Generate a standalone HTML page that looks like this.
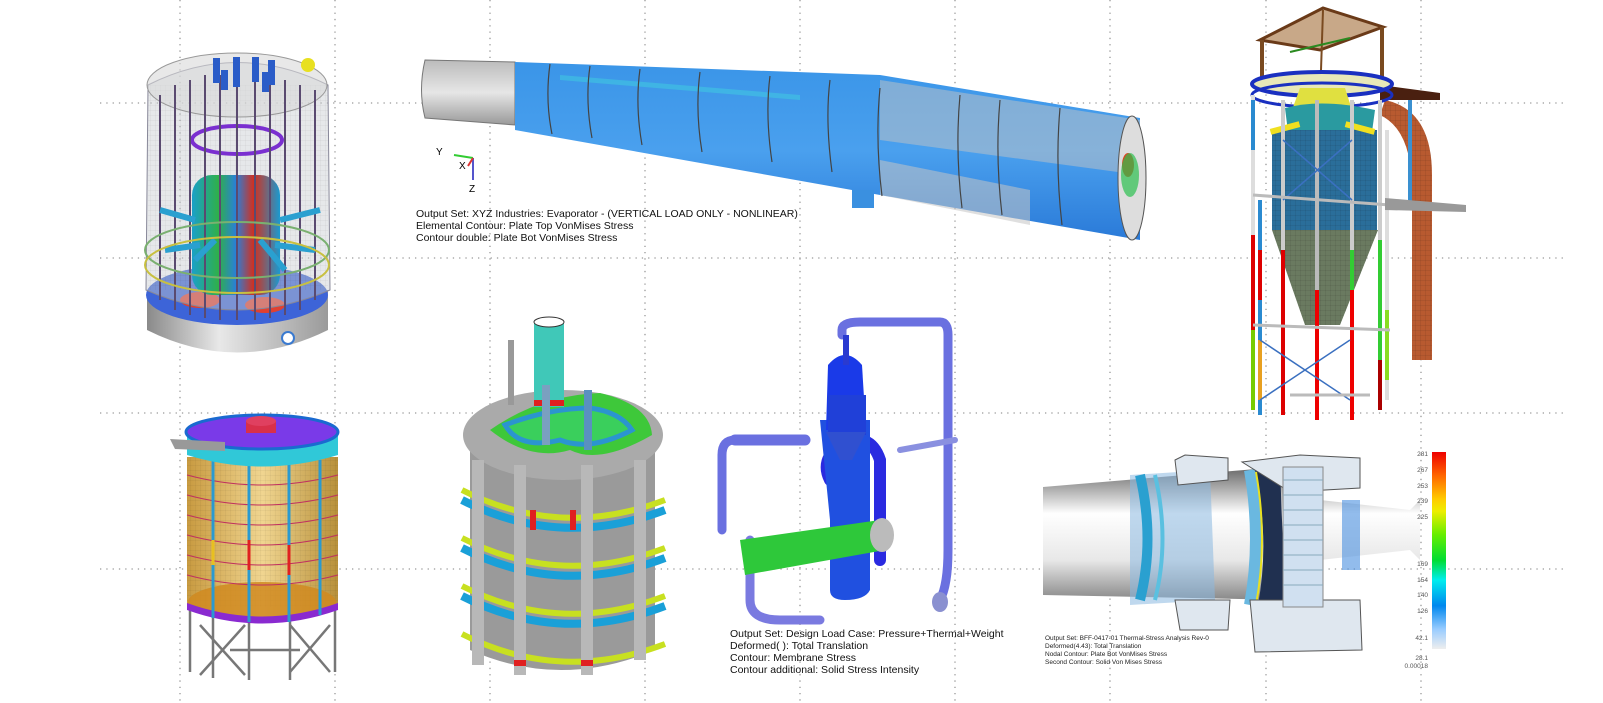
<!DOCTYPE html>
<html><head><meta charset="utf-8"><style>
html,body{margin:0;padding:0;background:#fff;width:1603px;height:703px;overflow:hidden}
svg{display:block}
text{font-family:"Liberation Sans",sans-serif}
</style></head><body>
<svg width="1603" height="703" viewBox="0 0 1603 703" xmlns="http://www.w3.org/2000/svg">
<defs>
<linearGradient id="gray" x1="0" x2="1"><stop offset="0" stop-color="#8a8a8a"/><stop offset=".4" stop-color="#e8e8e8"/><stop offset="1" stop-color="#9a9a9a"/></linearGradient>
<linearGradient id="pipeBlue" x1="0" y1="0" x2="0" y2="1"><stop offset="0" stop-color="#3a95e8"/><stop offset=".5" stop-color="#4aa0ee"/><stop offset="1" stop-color="#2a7ad8"/></linearGradient>
<linearGradient id="pipeGray" x1="0" y1="0" x2="0" y2="1"><stop offset="0" stop-color="#bbb"/><stop offset=".5" stop-color="#e6e6e6"/><stop offset="1" stop-color="#999"/></linearGradient>
<linearGradient id="tankIn" x1="0" x2="1"><stop offset="0" stop-color="#1aa0c8"/><stop offset=".3" stop-color="#2fb04a"/><stop offset=".5" stop-color="#2a7fd8"/><stop offset=".7" stop-color="#d03020"/><stop offset="1" stop-color="#1a9ad0"/></linearGradient>
<linearGradient id="orange" x1="0" x2="1"><stop offset="0" stop-color="#c89a40"/><stop offset=".5" stop-color="#f0d590"/><stop offset="1" stop-color="#b8903a"/></linearGradient>
<linearGradient id="flange" x1="0" y1="0" x2="0" y2="1"><stop offset="0" stop-color="#666"/><stop offset=".35" stop-color="#fff"/><stop offset=".7" stop-color="#e8e8e8"/><stop offset="1" stop-color="#888"/></linearGradient>
<linearGradient id="legend" x1="0" y1="0" x2="0" y2="1"><stop offset="0" stop-color="#e00"/><stop offset=".12" stop-color="#f60"/><stop offset=".24" stop-color="#fc0"/><stop offset=".3" stop-color="#ee0"/><stop offset=".42" stop-color="#6e0"/><stop offset=".55" stop-color="#0d3"/><stop offset=".65" stop-color="#0ee"/><stop offset=".78" stop-color="#08e"/><stop offset=".9" stop-color="#9cf"/><stop offset="1" stop-color="#eee"/></linearGradient>
<pattern id="mesh" width="5" height="5" patternUnits="userSpaceOnUse"><path d="M0 0H5M0 0V5" stroke="#000" stroke-opacity=".25" stroke-width=".5" fill="none"/></pattern>
</defs>

<!-- grid -->
<g stroke="#999" stroke-width="1.3" stroke-dasharray="1.3 5">
<line x1="100" y1="103" x2="1565" y2="103"/><line x1="100" y1="258" x2="1565" y2="258"/><line x1="100" y1="413" x2="1565" y2="413"/><line x1="100" y1="569" x2="1565" y2="569"/>
<line x1="180" y1="0" x2="180" y2="703"/><line x1="335" y1="0" x2="335" y2="703"/><line x1="490" y1="0" x2="490" y2="703"/><line x1="645" y1="0" x2="645" y2="703"/><line x1="800" y1="0" x2="800" y2="703"/><line x1="955" y1="0" x2="955" y2="703"/><line x1="1110" y1="0" x2="1110" y2="703"/><line x1="1266" y1="0" x2="1266" y2="703"/><line x1="1421" y1="0" x2="1421" y2="703"/>
</g>

<!-- Tank top-left -->
<g>
<path d="M147 290 L147 330 Q237 375 328 330 L328 290 Z" fill="url(#gray)"/>
<ellipse cx="237" cy="295" rx="91" ry="30" fill="#3d64d8"/>
<ellipse cx="200" cy="300" rx="20" ry="8" fill="#e04030"/><ellipse cx="265" cy="305" rx="20" ry="8" fill="#e04030"/>
<path d="M148 85 Q237 40 328 85 L330 290 Q237 330 146 290 Z" fill="#c8ccd0" fill-opacity=".45" stroke="#889" stroke-width="1"/>
<rect x="148" y="85" width="180" height="205" fill="url(#mesh)" opacity=".5"/>
<ellipse cx="237" cy="85" rx="90" ry="32" fill="#d8d8d8" fill-opacity=".6" stroke="#999"/>
<rect x="192" y="175" width="88" height="120" rx="20" fill="url(#tankIn)"/>
<ellipse cx="237" cy="140" rx="45" ry="14" fill="none" stroke="#7a2fd0" stroke-width="4"/>
<g stroke="#5a4a70" stroke-width="2"><line x1="160" y1="95" x2="160" y2="300"/><line x1="175" y1="85" x2="175" y2="310"/><line x1="190" y1="80" x2="190" y2="315"/><line x1="205" y1="75" x2="205" y2="318"/><line x1="220" y1="75" x2="220" y2="320"/><line x1="237" y1="75" x2="237" y2="320"/><line x1="255" y1="75" x2="255" y2="320"/><line x1="270" y1="78" x2="270" y2="318"/><line x1="285" y1="80" x2="285" y2="315"/><line x1="300" y1="85" x2="300" y2="310"/><line x1="315" y1="90" x2="315" y2="300"/></g>
<g fill="#2a5cc8"><rect x="213" y="58" width="7" height="25"/><rect x="233" y="57" width="7" height="30"/><rect x="252" y="57" width="7" height="25"/><rect x="268" y="60" width="7" height="25"/><rect x="221" y="70" width="7" height="20"/><rect x="262" y="72" width="7" height="20"/></g>
<circle cx="308" cy="65" r="7" fill="#e8e020"/>
<g stroke="#2aa0d0" stroke-width="6"><line x1="160" y1="210" x2="195" y2="220"/><line x1="280" y1="220" x2="320" y2="210"/><line x1="165" y1="250" x2="200" y2="245"/><line x1="275" y1="245" x2="315" y2="250"/><line x1="195" y1="260" x2="215" y2="240"/><line x1="260" y1="240" x2="285" y2="270"/></g>
<ellipse cx="237" cy="250" rx="92" ry="28" fill="none" stroke="#7ab070" stroke-width="2"/>
<ellipse cx="237" cy="265" rx="92" ry="28" fill="none" stroke="#c8c040" stroke-width="2"/>
<ellipse cx="288" cy="338" rx="6" ry="6" fill="#fff" stroke="#3a7ad0" stroke-width="2"/>
</g>

<!-- long pipe -->
<g>
<path d="M425 60 L515 62 L515 125 L425 118 Q418 90 425 60 Z" fill="url(#pipeGray)" stroke="#777"/>
<path d="M515 62 L880 75 L1140 118 L1140 240 L880 195 L515 130 Z" fill="url(#pipeBlue)"/>
<path d="M880 80 L1140 120 L1140 175 L880 140 Z" fill="#c4c4c4" opacity=".5"/>
<path d="M880 160 L1030 190 L1030 225 L880 195 Z" fill="#c4c4c4" opacity=".55"/>
<path d="M560 75 L800 95 L800 100 L560 80 Z" fill="#3fd0e0" opacity=".5"/>
<g stroke="#444" stroke-width="1.2" fill="none"><path d="M550 64 Q545 100 552 134"/><path d="M590 66 Q585 100 592 138"/><path d="M640 69 Q635 105 642 145"/><path d="M700 72 Q695 110 702 152"/><path d="M770 76 Q765 115 772 162"/><path d="M830 80 Q825 120 832 172"/><path d="M880 88 Q875 140 882 196"/><path d="M960 95 Q955 150 962 208"/><path d="M1000 100 Q995 155 1002 215"/><path d="M1060 108 Q1055 165 1062 225"/></g>
<ellipse cx="1132" cy="178" rx="14" ry="62" fill="#ddd" stroke="#555"/>
<ellipse cx="1128" cy="165" rx="6" ry="12" fill="#e04020"/>
<ellipse cx="1130" cy="175" rx="9" ry="22" fill="#2cc050" opacity=".7"/>
<rect x="852" y="190" width="22" height="18" fill="#3a90e0"/>
</g>

<!-- axis triad -->
<g stroke-width="2">
<line x1="473" y1="158" x2="454" y2="155" stroke="#3c3"/>
<line x1="473" y1="158" x2="473" y2="180" stroke="#55c"/>
<line x1="473" y1="158" x2="468" y2="166" stroke="#d33"/>
</g>
<text x="436" y="155" font-size="10">Y</text><text x="459" y="169" font-size="10">X</text><text x="469" y="192" font-size="10">Z</text>
<g font-size="10.5" fill="#111">
<text x="416" y="217">Output Set: XYZ Industries: Evaporator - (VERTICAL LOAD ONLY - NONLINEAR)</text>
<text x="416" y="229">Elemental Contour: Plate Top VonMises Stress</text>
<text x="416" y="241">Contour double: Plate Bot VonMises Stress</text>
</g>

<!-- Silo -->
<g>
<path d="M1260 40 L1323 8 L1383 27 L1320 50 Z" fill="#c8a888" stroke="#6a3a18" stroke-width="3"/>
<line x1="1262" y1="40" x2="1262" y2="85" stroke="#7a4a20" stroke-width="4"/>
<line x1="1382" y1="27" x2="1382" y2="85" stroke="#7a4a20" stroke-width="4"/>
<line x1="1323" y1="10" x2="1320" y2="100" stroke="#7a4a20" stroke-width="2"/>
<line x1="1290" y1="52" x2="1350" y2="38" stroke="#2a8a20" stroke-width="2"/>
<path d="M1380 85 L1440 93 L1440 100 L1380 100 Z" fill="#4a2010"/>
<path d="M1385 100 Q1432 110 1432 175 L1432 360 L1412 360 L1412 190 Q1412 130 1380 115 Z" fill="#b85a30"/>
<path d="M1385 100 Q1432 110 1432 175 L1432 360 L1412 360 L1412 190 Q1412 130 1380 115 Z" fill="url(#mesh)"/>
<ellipse cx="1322" cy="84" rx="70" ry="12" fill="#e8e8b8" stroke="#1a30c0" stroke-width="4"/>
<ellipse cx="1322" cy="95" rx="70" ry="12" fill="none" stroke="#1a30c0" stroke-width="3"/>
<path d="M1300 88 L1345 88 L1352 110 L1292 110 Z" fill="#e0e040"/>
<path d="M1285 108 Q1322 98 1375 110 L1372 132 L1288 132 Z" fill="#2a9aa0"/>
<path d="M1272 130 L1377 130 L1377 230 L1272 230 Z" fill="#2a6e9a"/>
<rect x="1272" y="130" width="105" height="100" fill="url(#mesh)"/>
<path d="M1272 230 L1378 230 L1340 325 L1305 325 Z" fill="#6a7a60"/>
<path d="M1272 230 L1378 230 L1340 325 L1305 325 Z" fill="url(#mesh)"/>
<g fill="#f0e020"><rect x="1270" y="125" width="30" height="6" transform="rotate(-15 1285 128)"/><rect x="1345" y="125" width="30" height="6" transform="rotate(15 1360 128)"/></g>
<g stroke-width="4">
<line x1="1253" y1="95" x2="1253" y2="410" stroke="#ddd"/><line x1="1253" y1="100" x2="1253" y2="150" stroke="#2a8ad0"/><line x1="1253" y1="235" x2="1253" y2="330" stroke="#d00"/><line x1="1253" y1="330" x2="1253" y2="410" stroke="#7c0"/>
<line x1="1260" y1="200" x2="1260" y2="415" stroke="#2a8ad0"/><line x1="1260" y1="250" x2="1260" y2="300" stroke="#d00"/><line x1="1260" y1="340" x2="1260" y2="400" stroke="#e8a020"/>
<line x1="1283" y1="100" x2="1283" y2="415" stroke="#ccc"/><line x1="1283" y1="250" x2="1283" y2="415" stroke="#d00"/>
<line x1="1317" y1="100" x2="1317" y2="420" stroke="#bbb"/><line x1="1317" y1="290" x2="1317" y2="420" stroke="#e00"/>
<line x1="1352" y1="100" x2="1352" y2="420" stroke="#ccc"/><line x1="1352" y1="250" x2="1352" y2="290" stroke="#3c3"/><line x1="1352" y1="290" x2="1352" y2="420" stroke="#e00"/>
<line x1="1380" y1="100" x2="1380" y2="410" stroke="#ccc"/><line x1="1380" y1="240" x2="1380" y2="400" stroke="#3c3"/><line x1="1380" y1="360" x2="1380" y2="410" stroke="#a00"/>
<line x1="1387" y1="130" x2="1387" y2="400" stroke="#ddd"/><line x1="1387" y1="310" x2="1387" y2="380" stroke="#8d2"/>
<line x1="1410" y1="100" x2="1410" y2="210" stroke="#3a90d0"/>
</g>
<g stroke="#3a70c0" stroke-width="1.5"><line x1="1260" y1="340" x2="1350" y2="400"/><line x1="1350" y1="340" x2="1260" y2="400"/><line x1="1283" y1="140" x2="1352" y2="200"/><line x1="1352" y1="140" x2="1283" y2="200"/></g>
<g stroke="#bbb" stroke-width="3"><line x1="1253" y1="195" x2="1390" y2="205"/><line x1="1253" y1="325" x2="1390" y2="330"/><line x1="1290" y1="395" x2="1370" y2="395"/></g>
<path d="M1385 198 L1466 205 L1466 212 L1385 210 Z" fill="#999"/>
</g>

<!-- bottom-left tank -->
<g>
<g stroke="#777" stroke-width="2.5"><line x1="190" y1="610" x2="190" y2="672"/><line x1="213" y1="615" x2="213" y2="678"/><line x1="249" y1="618" x2="249" y2="680"/><line x1="290" y1="618" x2="290" y2="680"/><line x1="335" y1="610" x2="335" y2="672"/><line x1="200" y1="625" x2="245" y2="675"/><line x1="245" y1="625" x2="200" y2="675"/><line x1="290" y1="625" x2="330" y2="672"/><line x1="330" y1="625" x2="290" y2="672"/><line x1="230" y1="650" x2="300" y2="650"/></g>
<path d="M187 457 L187 605 Q262 632 338 605 L338 457 Z" fill="url(#orange)"/>
<rect x="187" y="457" width="151" height="150" fill="url(#mesh)" opacity=".6"/>
<ellipse cx="262" cy="602" rx="74" ry="20" fill="#d08a20" opacity=".85"/>
<path d="M187 603 Q262 630 338 603 L338 610 Q262 637 187 610 Z" fill="#8a2ad0"/>
<g stroke="#c03060" stroke-width="1" fill="none"><path d="M187 475 Q262 495 338 475"/><path d="M187 495 Q262 515 338 495"/><path d="M187 515 Q262 535 338 515"/><path d="M187 535 Q262 555 338 535"/><path d="M187 555 Q262 575 338 555"/><path d="M187 575 Q262 595 338 575"/></g>
<g stroke-width="3"><line x1="213" y1="460" x2="213" y2="618" stroke="#2a9ad0"/><line x1="249" y1="465" x2="249" y2="622" stroke="#2a9ad0"/><line x1="289" y1="465" x2="289" y2="622" stroke="#2a9ad0"/><line x1="320" y1="460" x2="320" y2="615" stroke="#2a9ad0"/><line x1="249" y1="540" x2="249" y2="570" stroke="#e02020"/><line x1="289" y1="545" x2="289" y2="575" stroke="#e02020"/><line x1="213" y1="540" x2="213" y2="565" stroke="#e8c020"/></g>
<path d="M187 432 L187 455 Q262 478 338 455 L338 432 Z" fill="#30c8d8"/>
<ellipse cx="262" cy="432" rx="76" ry="17" fill="#7a3ae8" stroke="#1a6ad0" stroke-width="3"/>
<rect x="246" y="421" width="30" height="12" fill="#d8304a"/><ellipse cx="261" cy="421" rx="15" ry="5" fill="#e04060"/>
<path d="M170 439 L225 442 L225 451 L175 449 Z" fill="#999"/>
</g>

<!-- stacked vessel -->
<g>
<path d="M470 435 L655 435 L655 650 Q560 690 470 650 Z" fill="#9a9a9a"/>
<ellipse cx="563" cy="435" rx="100" ry="45" fill="#aaa"/>
<path d="M490 430 Q540 395 600 393 Q650 405 652 435 Q600 465 570 450 Q530 462 490 430 Z" fill="#3ec83a"/>
<path d="M505 425 Q550 408 590 408 Q620 412 632 430 Q590 452 560 440 Q520 450 505 425 Z" fill="#3ad060" stroke="#2a90e0" stroke-width="5" opacity=".9"/>
<rect x="534" y="322" width="30" height="85" fill="#40c8b8"/>
<rect x="534" y="400" width="30" height="6" fill="#e02020"/>
<ellipse cx="549" cy="322" rx="15" ry="5" fill="#fff" stroke="#333"/>
<rect x="508" y="340" width="6" height="65" fill="#999"/><rect x="542" y="385" width="8" height="60" fill="#7aa0c0"/><rect x="584" y="390" width="8" height="60" fill="#5a90c0"/>
<g fill="none" stroke-width="8"><path d="M462 500 Q560 550 665 510" stroke="#1aa0d8"/><path d="M462 548 Q560 598 665 558" stroke="#1aa0d8"/><path d="M462 596 Q560 646 665 606" stroke="#1aa0d8"/></g>
<g fill="none" stroke-width="6"><path d="M462 490 Q560 540 665 500" stroke="#c8e020"/><path d="M462 538 Q560 588 665 548" stroke="#c8e020"/><path d="M462 586 Q560 636 665 596" stroke="#c8e020"/><path d="M462 634 Q560 684 665 644" stroke="#c8e020"/></g>
<g stroke-width="12" stroke="#b8b8b8"><line x1="478" y1="460" x2="478" y2="665"/><line x1="520" y1="465" x2="520" y2="675"/><line x1="587" y1="465" x2="587" y2="675"/><line x1="640" y1="460" x2="640" y2="660"/></g>
<g fill="#e02020"><rect x="514" y="660" width="12" height="6"/><rect x="581" y="660" width="12" height="6"/><rect x="530" y="510" width="6" height="20"/><rect x="570" y="510" width="6" height="20"/></g>
</g>

<!-- blue vessel with pipes -->
<g>
<g fill="none" stroke-linecap="round">
<path d="M842 335 L842 330 Q842 322 860 322 L940 322 Q948 322 948 335 L948 550 Q948 585 940 600" stroke="#6a70e0" stroke-width="9"/>
<path d="M735 440 L805 440" stroke="#6a70e0" stroke-width="11"/>
<path d="M735 440 Q722 440 722 455 L722 530" stroke="#6a70e0" stroke-width="9"/>
<path d="M750 540 L750 600 Q750 620 780 620 L820 620" stroke="#7a7ae0" stroke-width="9"/>
<path d="M900 450 L955 440" stroke="#8a90e0" stroke-width="6"/>
<path d="M830 480 Q820 460 840 445 Q870 430 880 460 L880 560" stroke="#2a2ae0" stroke-width="12"/>
</g>
<path d="M820 420 L870 420 L870 590 Q865 600 845 600 Q830 600 830 590 L830 520 Z" fill="#2050e0"/>
<path d="M828 365 Q845 345 862 365 L866 430 L826 430 Z" fill="#1a3ae8"/>
<rect x="828" y="395" width="38" height="40" fill="#2040d8"/>
<path d="M826 432 L866 432 L852 460 L840 460 Z" fill="#3050d0"/>
<rect x="843" y="335" width="6" height="30" fill="#2a3ad0"/>
<path d="M740 540 L880 520 L885 550 L745 575 Z" fill="#2ec83a"/>
<ellipse cx="882" cy="535" rx="12" ry="17" fill="#bbb"/>
<ellipse cx="940" cy="602" rx="8" ry="10" fill="#8a90d0"/>
</g>
<g font-size="10.5" fill="#111">
<text x="730" y="637">Output Set: Design Load Case: Pressure+Thermal+Weight</text>
<text x="730" y="649">Deformed(      ): Total Translation</text>
<text x="730" y="661">Contour:   Membrane Stress</text>
<text x="730" y="673">Contour additional: Solid Stress Intensity</text>
</g>

<!-- flange section -->
<g>
<path d="M1043 487 L1280 467 L1290 470 L1320 500 L1410 510 L1420 500 L1420 560 L1410 550 L1320 560 L1290 600 L1043 595 Z" fill="url(#flange)"/>
<path d="M1130 475 L1210 470 L1215 600 L1130 605 Z" fill="#8ab8e0" opacity=".55"/>
<path d="M1140 475 Q1155 540 1140 600" stroke="#2aa0d0" stroke-width="10" fill="none"/>
<path d="M1155 475 Q1170 540 1155 600" stroke="#5ac0e0" stroke-width="4" fill="none"/>
<path d="M1250 470 Q1262 540 1250 605" stroke="#6ab8e0" stroke-width="12" fill="none"/>
<path d="M1255 470 L1280 467 L1285 600 L1258 605 Q1270 540 1255 470 Z" fill="#203050"/>
<path d="M1256 472 Q1268 540 1256 605" stroke="#e8e020" stroke-width="2" fill="none"/>
<path d="M1175 460 L1185 455 L1228 458 L1228 480 L1178 485 Z" fill="#dfe7ef" stroke="#555"/>
<path d="M1175 600 L1230 600 L1228 630 L1180 630 Z" fill="#dfe7ef" stroke="#555"/>
<path d="M1242 462 L1300 455 L1360 458 L1360 488 L1290 492 Z" fill="#dfe7ef" stroke="#555"/>
<path d="M1250 600 L1360 600 L1362 650 L1255 652 Z" fill="#dfe7ef" stroke="#555"/>
<rect x="1283" y="467" width="40" height="140" fill="#d0e0f0" stroke="#888"/>
<g stroke="#8ab" stroke-width="1"><line x1="1283" y1="480" x2="1323" y2="480"/><line x1="1283" y1="495" x2="1323" y2="495"/><line x1="1283" y1="510" x2="1323" y2="510"/><line x1="1283" y1="525" x2="1323" y2="525"/><line x1="1283" y1="540" x2="1323" y2="540"/><line x1="1283" y1="555" x2="1323" y2="555"/><line x1="1283" y1="570" x2="1323" y2="570"/><line x1="1283" y1="585" x2="1323" y2="585"/></g>
<rect x="1342" y="500" width="18" height="70" fill="#4a90e0" opacity=".6"/>
<rect x="1432" y="452" width="14" height="197" fill="url(#legend)"/>
<g font-size="6.5" fill="#555" text-anchor="end"><text x="1428" y="456">281</text><text x="1428" y="472">267</text><text x="1428" y="488">253</text><text x="1428" y="503">239</text><text x="1428" y="519">225</text><text x="1428" y="566">169</text><text x="1428" y="582">154</text><text x="1428" y="597">140</text><text x="1428" y="613">126</text><text x="1428" y="640">42.1</text><text x="1428" y="660">28.1</text><text x="1428" y="668">0.00018</text></g>
<g font-size="6.5" fill="#222"><text x="1045" y="640">Output Set: BFF-0417-01 Thermal-Stress Analysis Rev-0</text><text x="1045" y="648">Deformed(4.43): Total Translation</text><text x="1045" y="656">Nodal Contour: Plate Bot VonMises Stress</text><text x="1045" y="664">Second Contour: Solid Von Mises Stress</text></g>
</g>
</svg>
</body></html>
